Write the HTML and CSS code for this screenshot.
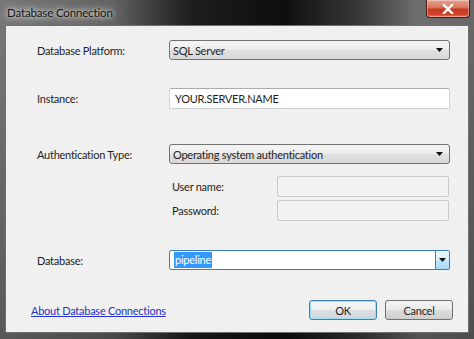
FILE: index.html
```html
<!DOCTYPE html>
<html lang="en">
<head>
    <meta charset="UTF-8">
    <title>Database Connection</title>
    <link rel="stylesheet" href="styles.css">
</head>
<body>
    <div class="window">
        <div class="titlebar">
            <span class="title">Database Connection</span>
            <div class="close">
                <svg width="12" height="10" viewBox="0 0 12 10"><path d="M2 1 L10 9 M10 1 L2 9" stroke="#fff" stroke-width="2.4" stroke-linecap="square"/></svg>
            </div>
        </div>

        <div class="client">
            <div class="row row-platform">
                <label>Database Platform:</label>
                <div class="combo">
                    <span>SQL Server</span>
                    <svg class="arrow" width="7" height="4" viewBox="0 0 7 4"><path d="M0 0 H7 L3.5 4 Z" fill="#111"/></svg>
                </div>
            </div>

            <div class="row row-instance">
                <label>Instance:</label>
                <div class="textbox">YOUR.SERVER.NAME</div>
            </div>

            <div class="row row-auth">
                <label>Authentication Type:</label>
                <div class="combo">
                    <span>Operating system authentication</span>
                    <svg class="arrow" width="7" height="4" viewBox="0 0 7 4"><path d="M0 0 H7 L3.5 4 Z" fill="#111"/></svg>
                </div>
            </div>

            <div class="sub sub-user">
                <label>User name:</label>
                <div class="textbox disabled"></div>
            </div>
            <div class="sub sub-pass">
                <label>Password:</label>
                <div class="textbox disabled"></div>
            </div>

            <div class="row row-db">
                <label>Database:</label>
                <div class="dbcombo">
                    <span class="selected">pipeline</span>
                    <div class="dropbtn">
                        <svg width="7" height="4" viewBox="0 0 7 4"><path d="M0 0 H7 L3.5 4 Z" fill="#111"/></svg>
                    </div>
                </div>
            </div>

            <div class="footer">
                <a href="#" class="help">About Database Connections</a>
                <div class="buttons">
                    <button class="btn btn-default">OK</button>
                    <button class="btn">Cancel</button>
                </div>
            </div>
        </div>
    </div>
</body>
</html>
```

FILE: styles.css
```css
* {
    box-sizing: border-box;
}

body {
    margin: 0;
    font-family: Lato, "Liberation Sans", sans-serif;
    font-size: 11px;
    letter-spacing: -0.25px;
    color: #1e1e1e;
}

.window {
    width: 474px;
    height: 339px;
    padding: 0 5px 6px 5px;
    display: flex;
    flex-direction: column;
    background:
        linear-gradient(to bottom, rgba(0,0,0,0) 0, rgba(0,0,0,0) 25px, rgba(0,0,0,0.25) 100%),
        linear-gradient(to right, #767676 0, #626262 24%, #1e1e1e 40%, #0e0e0e 60%, #3a3a3a 76%, #6e6e6e 88%, #686868 100%);
}

.titlebar {
    height: 25px;
    display: flex;
    justify-content: space-between;
    align-items: flex-start;
}

.title {
    margin: 6px 0 0 2px;
    font-size: 11.5px;
    letter-spacing: -0.15px;
    color: #151515;
    text-shadow: 0 0 4px rgba(255,255,255,0.9), 0 0 9px rgba(255,255,255,0.7), 0 0 14px rgba(255,255,255,0.5);
}

/* close button */
.close {
    width: 44px;
    height: 18px;
    margin-right: -1px;
    display: flex;
    align-items: center;
    justify-content: center;
    border: 1px solid #4a1a12;
    border-top: none;
    border-radius: 0 0 4px 4px;
    background: linear-gradient(to bottom, #e8a493 0, #d6735d 45%, #c7381e 55%, #d2442a 85%, #e8785e 100%);
    box-shadow: inset 0 0 0 1px rgba(255,255,255,0.35);
}

.client {
    flex: 1;
    border: 1px solid #6f6f6f;
    background: #f0f0f0;
    padding: 0 18px 0 31px;
    display: flex;
    flex-direction: column;
}

.row {
    display: grid;
    grid-template-columns: 132px 1fr;
    align-items: center;
}

.row-platform { margin-top: 14px; }
.row-instance { margin-top: 28px; }
.row-auth { margin-top: 35px; }
.row-db { margin-top: 29px; }

.sub {
    margin-left: 132px;
    display: grid;
    grid-template-columns: 108px 1fr;
    align-items: center;
    margin-right: 1px;
}

.sub label {
    padding-left: 3px;
}

.sub-user { margin-top: 12px; }
.sub-pass { margin-top: 3px; }

.combo {
    height: 20px;
    display: flex;
    align-items: center;
    justify-content: space-between;
    padding: 0 4px 0 3px;
    border: 1px solid #727272;
    border-radius: 3px;
    background: linear-gradient(to bottom, #f5f5f5 0, #ececec 50%, #e0e0e0 51%, #d8d8d8 100%);
}

.combo .arrow {
    margin-right: 2px;
}

.textbox {
    height: 21px;
    display: flex;
    align-items: center;
    padding-left: 5px;
    background: #fff;
    border: 1px solid #cfd1d6;
    border-top-color: #a9abb0;
    border-radius: 2px;
}

.textbox.disabled {
    background: #f2f2f2;
    border-color: #c9c9c9;
}

.dbcombo {
    height: 20px;
    display: flex;
    align-items: center;
    justify-content: space-between;
    padding-left: 4px;
    background: #fff;
    border: 1px solid #3f7cb5;
    border-radius: 2px;
}

.selected {
    background: #3399ff;
    color: #fff;
    padding: 1px 1px 2px 1px;
    line-height: 13px;
}

.dropbtn {
    width: 14px;
    height: 100%;
    display: flex;
    align-items: center;
    justify-content: center;
    border-left: 1px solid #3c7fb1;
    background: linear-gradient(to bottom, #eaf6fd 0, #d9f0fc 50%, #bee6fd 51%, #a7d9f5 100%);
}

.footer {
    margin-top: 30px;
    margin-left: -6px;
    margin-right: -3px;
    display: flex;
    justify-content: space-between;
    align-items: center;
}

.help {
    color: #2733c9;
    text-decoration: underline;
}

.buttons {
    display: flex;
    gap: 8px;
}

.btn {
    width: 68px;
    height: 20px;
    padding: 0;
    font-family: Lato, "Liberation Sans", sans-serif;
    font-size: 11px;
    letter-spacing: -0.25px;
    color: #1e1e1e;
    border: 1px solid #707070;
    border-radius: 3px;
    background: linear-gradient(to bottom, #f2f2f2 0, #ebebeb 50%, #dddddd 51%, #cfcfcf 100%);
}

.btn-default {
    border-color: #3c7fb1;
    box-shadow: inset 0 0 0 1px #9fdcf6;
    background: linear-gradient(to bottom, #f4f6f7 0, #eceef0 50%, #dde0e2 51%, #d3d6d8 100%);
}
```
